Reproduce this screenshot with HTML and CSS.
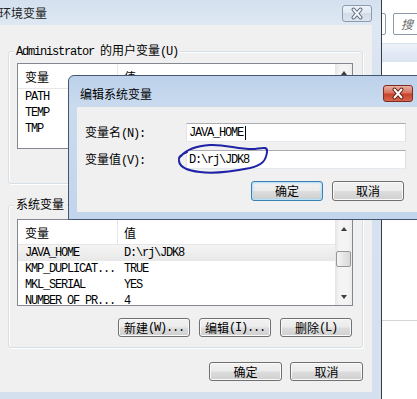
FILE: index.html
```html
<!DOCTYPE html>
<html lang="zh-CN">
<head>
<meta charset="utf-8">
<title>环境变量</title>
<link rel="stylesheet" href="styles.css">
</head>
<body>
<div class="screen">
  <div class="bg-addr"></div>
  <div class="bg-search"><span>搜</span></div>
  <div class="bg-toolbar"></div>
  <div class="bg-line"></div>

  <div class="win outer">
    <div class="titlebar">
      <span class="title">环境变量</span>
      <span class="close inactive">
        <svg width="28" height="15" viewBox="0 0 28 15"><path d="M10.5 3.5 L17.5 11.5 M17.5 3.5 L10.5 11.5" stroke="#5a6676" stroke-width="4" stroke-linecap="round"/><path d="M10.5 3.5 L17.5 11.5 M17.5 3.5 L10.5 11.5" stroke="#f4f6f9" stroke-width="2" stroke-linecap="round"/></svg>
      </span>
    </div>
    <div class="client">
      <div class="group g1">
        <div class="glabel"><span class="m">Administrator </span>的用户变量<span class="m">(U)</span></div>
        <div class="list l1">
          <div class="lmain">
            <div class="lhead"><div class="c1">变量</div><div class="c2">值</div></div>
            <div class="row"><div class="c1 m">PATH</div></div>
            <div class="row"><div class="c1 m">TEMP</div></div>
            <div class="row"><div class="c1 m">TMP</div></div>
          </div>
          <div class="sbar">
            <div class="sbtn up"><i></i></div>
            <div class="strack"></div>
            <div class="sbtn down"><i></i></div>
          </div>
        </div>
      </div>

      <div class="group g2">
        <div class="glabel">系统变量</div>
        <div class="list l2">
          <div class="lmain">
            <div class="lhead"><div class="c1">变量</div><div class="c2">值</div></div>
            <div class="row sel"><div class="c1 m">JAVA_HOME</div><div class="c2 m">D:\rj\JDK8</div></div>
            <div class="row"><div class="c1 m">KMP_DUPLICAT...</div><div class="c2 m">TRUE</div></div>
            <div class="row"><div class="c1 m">MKL_SERIAL</div><div class="c2 m">YES</div></div>
            <div class="row"><div class="c1 m">NUMBER_OF_PR...</div><div class="c2 m">4</div></div>
          </div>
          <div class="sbar">
            <div class="sbtn up"><i></i></div>
            <div class="strack"><div class="thumb"></div></div>
            <div class="sbtn down"><i></i></div>
          </div>
        </div>
        <div class="btnrow grp-btns">
          <div class="btn small">新建<span class="m">(W)...</span></div>
          <div class="btn small">编辑<span class="m">(I)...</span></div>
          <div class="btn small">删除<span class="m">(L)</span></div>
        </div>
      </div>

      <div class="btnrow dlg-btns">
        <div class="btn wide">确定</div>
        <div class="btn wide">取消</div>
      </div>
    </div>
  </div>

  <div class="win edit">
    <div class="titlebar">
      <span class="title">编辑系统变量</span>
      <span class="close active">
        <svg width="28" height="15" viewBox="0 0 28 15"><path d="M10.5 3.5 L17.5 11.5 M17.5 3.5 L10.5 11.5" stroke="#5e1a12" stroke-width="4" stroke-linecap="round"/><path d="M10.5 3.5 L17.5 11.5 M17.5 3.5 L10.5 11.5" stroke="#ffffff" stroke-width="2" stroke-linecap="round"/></svg>
      </span>
    </div>
    <div class="ebody">
      <div class="field">
        <div class="flabel">变量名<span class="m">(N):</span></div>
        <div class="input"><span class="m">JAVA_HOME</span><span class="caret"></span></div>
      </div>
      <div class="field">
        <div class="flabel">变量值<span class="m">(V):</span></div>
        <div class="input"><span class="m">D:\rj\JDK8</span></div>
      </div>
      <div class="btnrow ebtns">
        <div class="btn small def">确定</div>
        <div class="btn small">取消</div>
      </div>
    </div>
  </div>

  <svg class="mark" width="417" height="399" viewBox="0 0 417 399">
    <path d="M181 156 C186 150 196 146 210 145 C225 144 240 150 255 149 C262 148 268 146 267 152 C266 160 263 165 250 168 C235 171 215 174 200 172 C190 171 180 168 179 161 C178 157 182 154 187 152" fill="none" stroke="#1f22a6" stroke-width="2" stroke-linecap="round" stroke-linejoin="round"/>
  </svg>
</div>
</body>
</html>
```

FILE: styles.css
```css
* { box-sizing: border-box; }
html, body { margin: 0; padding: 0; }
body {
  width: 417px;
  height: 399px;
  overflow: hidden;
  background: #ffffff;
  font-family: "Noto Sans CJK SC", sans-serif;
  font-size: 12px;
  line-height: 14px;
  color: #000;
}
.screen { position: relative; width: 417px; height: 399px; overflow: hidden; }
.m { font-family: "Liberation Mono", monospace; letter-spacing: -1.2px; }

/* background application (explorer) */
.bg-addr {
  position: absolute; left: 300px; top: 13px; width: 86px; height: 22px;
  border: 1px solid #8e99a8; border-radius: 2px; background: #fff;
}
.bg-search {
  position: absolute; left: 393px; top: 13px; width: 60px; height: 22px;
  border: 1px solid #8e99a8; border-radius: 2px; background: #fff;
  padding: 3px 0 0 7px; color: #6d6d6d; font-style: italic;
}
.bg-toolbar {
  position: absolute; left: 381px; top: 43px; width: 40px; height: 19px;
  border-top: 1px solid #d9e1ec;
  background: linear-gradient(#eef2f9, #e3eaf5 50%, #dbe4f1);
}
.bg-line { position: absolute; left: 381px; top: 320px; width: 40px; height: 1px; background: #d4d4d4; }

/* windows */
.win { position: absolute; display: flex; flex-direction: column; }
.titlebar { display: flex; align-items: flex-start; flex: none; }
.title { white-space: nowrap; line-height: 14px; }
.close {
  margin-left: auto; width: 30px; height: 17px; border-radius: 3px;
  display: flex; align-items: center; justify-content: center;
}
.close svg { display: block; }

.outer {
  left: -8px; top: 0; width: 390px; height: 400px;
  border-right: 1px solid #333c47;
  background: linear-gradient(#d4e0ee, #dee8f3 25px, #d7e3f0 80px, #d4e0ee);
}
.outer .titlebar { height: 25px; padding-left: 7px; }
.outer .title { margin-top: 6px; color: #222; }
.close.inactive {
  margin-top: 5px; margin-right: 9px;
  border: 1px solid #8b9bb0;
  background: linear-gradient(#eef3f9, #e0e8f2 50%, #d2ddea 50%, #dbe4ef);
}
.client {
  flex: none; height: 367px; margin: 0 9px 0 8px;
  background: #f0f0f0;
  display: flex; flex-direction: column;
}

.group {
  margin-left: 8px; width: 355px;
  border: 1px solid #d5dfe5; border-radius: 3px;
  box-shadow: inset 1px 1px 0 #fff, 1px 1px 0 #fff;
  display: flex; flex-direction: column; align-items: flex-start;
}
.g1 { margin-top: 26px; height: 133px; }
.g2 { margin-top: 21px; height: 143px; }
.glabel {
  margin: -9px 0 0 5px; padding: 0 2px; height: 14px; line-height: 14px;
  background: #f0f0f0; white-space: nowrap;
}

.list {
  margin-left: 8px; width: 336px;
  border: 1px solid #828790; background: #fff;
  display: flex; flex: none;
}
.l1 { margin-top: 6px; height: 86px; }
.l2 { margin-top: 8px; height: 87px; }
.lmain { flex: 1; overflow: hidden; }
.lhead { display: flex; height: 25px; border-bottom: 1px solid #e6e6e6; }
.lhead .c1 { width: 100px; border-right: 1px solid #e3e6ea; padding: 6px 0 0 7px; }
.lhead .c2 { padding: 6px 0 0 6px; }
.row { display: flex; height: 16px; line-height: 16px; white-space: nowrap; }
.row .c1 { width: 100px; padding-left: 7px; flex: none; }
.row .c2 { padding-left: 6px; }
.row.sel { background: linear-gradient(#f4f4f4, #e8e8e8); }

.sbar {
  width: 17px; flex: none; display: flex; flex-direction: column;
  background: linear-gradient(90deg, #e4e4e4, #f4f4f4 25%, #f4f4f4 75%, #ececec);
}
.sbtn { height: 17px; display: flex; align-items: center; justify-content: center; flex: none; }
.sbtn i { display: block; width: 0; height: 0; border-left: 3.5px solid transparent; border-right: 3.5px solid transparent; }
.sbtn.up i { border-bottom: 4px solid #3c3c3c; }
.sbtn.down i { border-top: 4px solid #3c3c3c; }
.strack { flex: 1; padding-top: 14px; }
.thumb {
  margin: 0 1px; height: 16px;
  border: 1px solid #979797; border-radius: 2px;
  background: linear-gradient(90deg, #f4f4f4, #e6e6e6 50%, #d9d9d9);
}

.btnrow { display: flex; }
.grp-btns { align-self: stretch; justify-content: flex-end; gap: 9px; margin-top: 12px; padding-right: 10px; }
.dlg-btns { justify-content: flex-end; gap: 8px; margin-top: 14px; padding-right: 9px; }
.btn {
  display: flex; align-items: center; justify-content: center;
  height: 19px; line-height: 14px; white-space: nowrap;
  border: 1px solid #707070; border-radius: 3px;
  background: linear-gradient(#f2f2f2, #ebebeb 48%, #dddddd 52%, #cfcfcf);
  box-shadow: inset 0 0 0 1px #fafafa;
}
.btn.small { width: 72px; }
.btn.wide { width: 73px; }
.btn.def {
  border-color: #3c7fb1;
  box-shadow: inset 0 0 0 1px #b6e3fb, inset 0 0 3px #8cccf0;
}

/* edit dialog */
.edit {
  left: 68px; top: 75px; width: 360px; height: 145px;
  border: 1px solid #465670; border-radius: 6px 6px 0 0;
  background: linear-gradient(#bcd1ea, #cadbef 31px, #c2d5ec);
}
.edit .titlebar { height: 31px; padding-left: 11px; }
.edit .title { margin-top: 11px; }
.close.active {
  margin-top: 9px; margin-right: 14px;
  border: 1px solid #7b2b22;
  background: linear-gradient(#eab1a3, #d9735f 45%, #c6432d 55%, #d8674f);
}
.ebody {
  flex: none; height: 105px; margin: 0 8px;
  background: #f0f0f0; padding: 16px 0 0 8px;
}
.field { display: flex; align-items: center; height: 19px; }
.field + .field { margin-top: 8px; }
.flabel { width: 101px; white-space: nowrap; }
.input {
  width: 220px; height: 19px; background: #fff;
  border: 1px solid; border-color: #abadb3 #dbdfe6 #e3e9ef #e2e3ea;
  padding-left: 2px; display: flex; align-items: center; white-space: nowrap;
}
.caret { display: inline-block; width: 1px; height: 14px; background: #000; margin-left: 2px; }
.ebtns { gap: 9px; margin-top: 12px; padding-left: 166px; }
.ebtns .btn { height: 20px; }

.mark { position: absolute; left: 0; top: 0; pointer-events: none; }
```
